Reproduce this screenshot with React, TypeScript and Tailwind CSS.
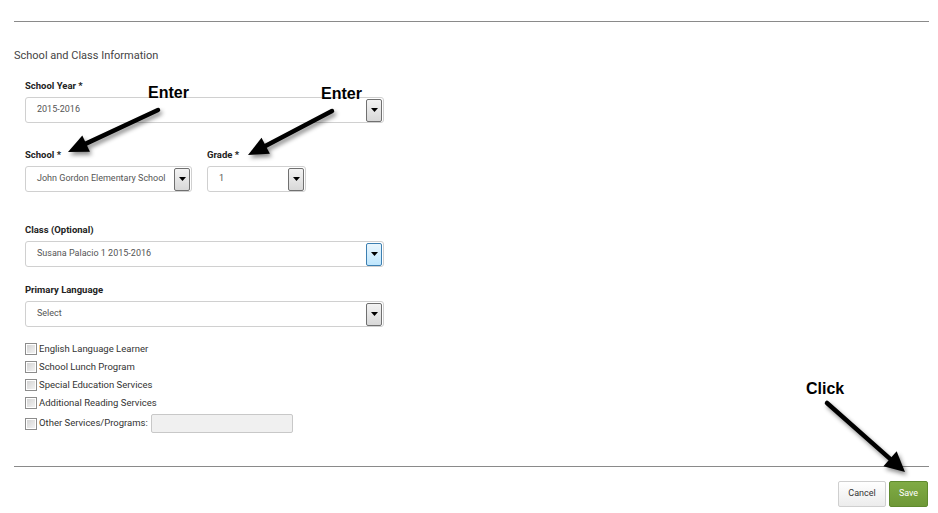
import React from 'react'

type Pt = [number, number]

// annotation arrow: shaft from tail to head base, triangular head at tip
function Arrow({ tail, tip, head = 20, half = 9 }: { tail: Pt; tip: Pt; head?: number; half?: number }) {
  const dx = tip[0] - tail[0]
  const dy = tip[1] - tail[1]
  const len = Math.hypot(dx, dy)
  const ux = dx / len
  const uy = dy / len
  const bx = tip[0] - ux * head
  const by = tip[1] - uy * head
  const nx = -uy
  const ny = ux
  const pts = `${tip[0]},${tip[1]} ${bx + nx * half},${by + ny * half} ${bx - nx * half},${by - ny * half}`
  return (
    <g>
      <line x1={tail[0]} y1={tail[1]} x2={bx + ux * 2} y2={by + uy * 2} stroke="#000" strokeWidth={4.5} strokeLinecap="round" />
      <polygon points={pts} fill="#000" />
    </g>
  )
}

function DropButton({ active = false }: { active?: boolean }) {
  return (
    <div
      className={
        active
          ? 'flex h-[23px] w-[16px] items-center justify-center rounded-[2px] border border-[#3c7fb1] bg-gradient-to-b from-[#eaf6fd] to-[#bee6fd]'
          : 'flex h-[23px] w-[16px] items-center justify-center rounded-[2px] border border-[#707070] bg-gradient-to-b from-[#f3f3f3] to-[#d8d8d8]'
      }
    >
      <svg width="7" height="4" viewBox="0 0 7 4">
        <path d="M0,0 L7,0 L3.5,4 Z" fill="#000" />
      </svg>
    </div>
  )
}

function Select({ value, width, active }: { value: string; width: string; active?: boolean }) {
  return (
    <div className={`flex h-[26px] items-center justify-between rounded-[3px] border border-[#d0d0d0] bg-white pl-[11px] pr-[1px] ${width}`}>
      <span className="text-[9px] text-[#555]">{value}</span>
      <DropButton active={active} />
    </div>
  )
}

function Label({ children }: { children: React.ReactNode }) {
  return <div className="h-[12px] text-[9.5px] font-bold leading-[12px] text-[#222]">{children}</div>
}

function Box() {
  return (
    <span className="flex h-[12px] w-[12px] items-center justify-center border border-[#8c8c8c] bg-white">
      <span className="h-[8px] w-[8px] bg-gradient-to-br from-[#d4d4d4] to-[#f2f2f2]" />
    </span>
  )
}

function Check({ label }: { label: string }) {
  return (
    <div className="flex h-[18px] items-center">
      <Box />
      <span className="ml-[2px] text-[9.5px] text-[#333]">{label}</span>
    </div>
  )
}

export default function App() {
  return (
    <div className="relative h-[513px] w-[938px] overflow-hidden bg-white font-['Roboto',sans-serif]">
      <div className="pl-[14px] pr-[9px] pt-[21px]">
        <div className="border-t border-[#8a8a8a]" />
        <h2 className="mt-[27px] text-[11px] leading-[14px] text-[#444]">School and Class Information</h2>

        <div className="pl-[11px]">
          <div className="mt-[17px]">
            <Label>School Year *</Label>
            <div className="mt-[5px]">
              <Select value="2015-2016" width="w-[359px]" />
            </div>
          </div>

          <div className="mt-[26px] flex gap-[15px]">
            <div>
              <Label>School *</Label>
              <div className="mt-[5px]">
                <Select value="John Gordon Elementary School" width="w-[167px]" />
              </div>
            </div>
            <div>
              <Label>Grade *</Label>
              <div className="mt-[5px]">
                <Select value="1" width="w-[99px]" />
              </div>
            </div>
          </div>

          <div className="mt-[32px]">
            <Label>Class (Optional)</Label>
            <div className="mt-[5px]">
              <Select value="Susana Palacio 1 2015-2016" width="w-[359px]" active />
            </div>
          </div>

          <div className="mt-[17px]">
            <Label>Primary Language</Label>
            <div className="mt-[5px]">
              <Select value="Select" width="w-[359px]" />
            </div>
          </div>

          <div className="mt-[13px]">
            <Check label="English Language Learner" />
            <Check label="School Lunch Program" />
            <Check label="Special Education Services" />
            <Check label="Additional Reading Services" />
            <div className="flex h-[23px] items-center">
              <Box />
              <span className="ml-[2px] text-[9.5px] text-[#333]">Other Services/Programs:</span>
              <div className="ml-[3px] h-[19px] w-[142px] rounded-[2px] border border-[#c8c8c8] bg-[#f0f0f0]" />
            </div>
          </div>
        </div>

        <div className="mt-[31px] border-t border-[#8a8a8a]" />
        <div className="mt-[14px] flex justify-end gap-[3px] pr-[1px]">
          <button className="h-[26px] w-[48px] rounded-[2px] border border-[#cfcfcf] bg-gradient-to-b from-white to-[#ececec] text-[9px] text-[#333]">
            Cancel
          </button>
          <button className="h-[26px] w-[39px] rounded-[2px] border border-[#5f8a2e] bg-gradient-to-b from-[#80ab45] to-[#6e9836] text-[9px] text-white">
            Save
          </button>
        </div>
      </div>

      {/* annotations drawn over the form */}
      <svg className="pointer-events-none absolute inset-0 drop-shadow-[2px_3px_2px_rgba(0,0,0,0.45)]" width="938" height="513">
        <Arrow tail={[158, 110]} tip={[68, 152]} />
        <Arrow tail={[332, 111]} tip={[248, 155]} />
        <Arrow tail={[827, 403]} tip={[905, 472]} half={10} />
      </svg>
      <div className="pointer-events-none absolute left-[148px] top-[85px] text-[16px] font-bold leading-[16px] text-black font-['Liberation_Sans',sans-serif]">
        Enter
      </div>
      <div className="pointer-events-none absolute left-[321px] top-[86px] text-[16px] font-bold leading-[16px] text-black font-['Liberation_Sans',sans-serif]">
        Enter
      </div>
      <div className="pointer-events-none absolute left-[806px] top-[381px] text-[16px] font-bold leading-[16px] text-black font-['Liberation_Sans',sans-serif]">
        Click
      </div>
    </div>
  )
}
